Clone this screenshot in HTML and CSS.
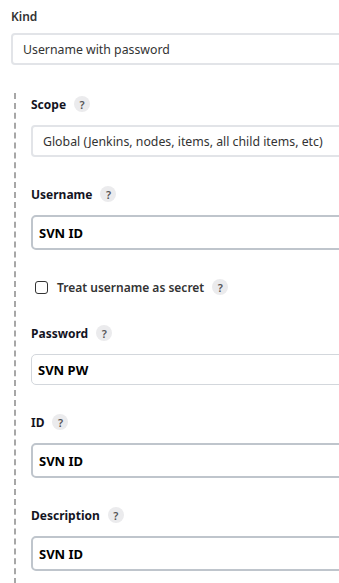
FILE: index.html
```html
<!DOCTYPE html>
<html lang="en">
<head>
  <meta charset="UTF-8" />
  <meta name="viewport" content="width=device-width, initial-scale=1.0"/>
  <title>Username with password</title>
  <link rel="stylesheet" href="styles.css">
</head>
<body>
<div class="form">
  <div class="kind">
    <div class="kind-label">Kind</div>
    <div class="select kind-select">Username with password</div>
  </div>

  <div class="nested">
    <div class="field">
      <div class="field-label">Scope <span class="help">?</span></div>
      <div class="select">Global (Jenkins, nodes, items, all child items, etc)</div>
    </div>

    <div class="field">
      <div class="field-label">Username <span class="help">?</span></div>
      <div class="input">SVN ID</div>
    </div>

    <div class="check-row">
      <span class="checkbox"></span>
      <span class="check-label">Treat username as secret</span>
      <span class="help">?</span>
    </div>

    <div class="field">
      <div class="field-label">Password <span class="help">?</span></div>
      <div class="input secret">SVN PW</div>
    </div>

    <div class="field">
      <div class="field-label">ID <span class="help">?</span></div>
      <div class="input">SVN ID</div>
    </div>

    <div class="field">
      <div class="field-label">Description <span class="help">?</span></div>
      <div class="input">SVN ID</div>
    </div>
  </div>
</div>
</body>
</html>
```

FILE: styles.css
```css
body {
  margin: 0;
  background-color: #fff;
  font-family: "Noto Sans", "Open Sans", sans-serif;
  font-size: 12px;
  color: #14141f;
  overflow: hidden;
}

.form {
  padding-left: 11px;
  margin-right: -40px;
}

.kind-label {
  padding-top: 7px;
  line-height: 20px;
  font-weight: 600;
  color: #333;
}

.select {
  box-sizing: border-box;
  display: flex;
  align-items: center;
  height: 32px;
  padding-left: 10px;
  border: 2px solid #e2e4e8;
  border-radius: 4px;
  font-size: 12.3px;
  color: #333;
}

.kind-select {
  margin-top: 6px;
}

.nested {
  margin-top: 28px;
  margin-left: 3px;
  padding-top: 1px;
  padding-left: 15px;
  border-left: 2px dashed #a7a7a7;
  min-height: 500px;
}

.field {
  margin-bottom: 27px;
}

.field-label {
  display: flex;
  align-items: center;
  gap: 8px;
  height: 20px;
  margin-bottom: 11px;
  font-weight: 700;
}

.help {
  display: inline-flex;
  align-items: center;
  justify-content: center;
  width: 16px;
  height: 16px;
  border-radius: 50%;
  background-color: #ebebed;
  color: #555;
  font-size: 11px;
  font-weight: 600;
}

.input {
  box-sizing: border-box;
  display: flex;
  align-items: center;
  height: 35px;
  padding-left: 6px;
  border: 2px solid #bfc5cc;
  border-radius: 5px;
  font-size: 13px;
  font-weight: 700;
  color: #000;
}

.input.secret {
  height: 31px;
  border: 1.5px solid #d3d7dc;
}

.check-row {
  display: flex;
  align-items: center;
  height: 20px;
  padding-left: 4px;
  margin-bottom: 26px;
}

.checkbox {
  box-sizing: border-box;
  width: 13px;
  height: 13px;
  border: 1.5px solid #333;
  border-radius: 3px;
  margin-right: 9px;
}

.check-label {
  font-weight: 600;
  color: #333;
  margin-right: 8px;
}
```
